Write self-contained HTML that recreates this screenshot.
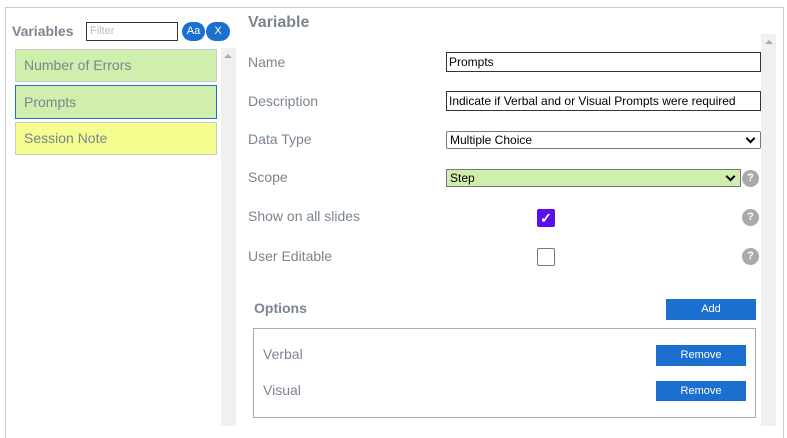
<!DOCTYPE html>
<html><head><style>
body{margin:0;width:787px;height:426px;background:#fff;font-family:"Liberation Sans",Arial,sans-serif;position:relative;overflow:hidden}
.a{position:absolute}
.lab{position:absolute;left:248px;font-size:14px;color:#7a8590}
.inp{position:absolute;left:446px;width:315px;height:20px;border:1px solid #333;box-sizing:border-box;font-size:12px;line-height:18px;padding-left:2px;color:#000}
.q{position:absolute;width:17px;height:17px;border-radius:50%;background:#aaa;color:#fff;font-size:11px;font-weight:bold;text-align:center;line-height:17px}
.btn{position:absolute;background:#1a6fcf;color:#fff;font-size:11px;text-align:center}
.item{position:absolute;left:15px;width:202px;box-sizing:border-box;border:1px solid #ccc;font-size:14px;color:#7a8590;padding-left:8px}
.chev{position:absolute;right:6px;top:3px;width:5px;height:5px;border-right:2px solid #000;border-bottom:2px solid #000;transform:rotate(45deg)}
</style></head><body>
<div class="a" style="left:5px;top:7px;width:777px;height:430px;border:1px solid #ccc;border-bottom:none"></div>
<div class="a" style="left:12px;top:23px;font-size:14px;font-weight:bold;color:#7a8590">Variables</div>
<div class="a" style="left:86px;top:22px;width:92px;height:19px;border:1px solid #333;box-sizing:border-box;font-size:11px;color:#bbb;padding-left:3px;line-height:17px">Filter</div>
<div class="a" style="left:182px;top:22px;width:23px;height:19px;border-radius:10px;background:#1a6fcf;color:#fff;font-size:11px;text-align:center;line-height:19px">Aa</div>
<div class="a" style="left:206px;top:22px;width:24px;height:19px;border-radius:10px;background:#1a6fcf;color:#fff;font-size:11px;text-align:center;line-height:19px">X</div>
<div class="item" style="top:49px;height:33px;line-height:31px;background:#d0eeac">Number of Errors</div>
<div class="item" style="top:85px;height:34px;line-height:32px;background:#d0eeac;border-color:#1a6fcf">Prompts</div>
<div class="item" style="top:122px;height:33px;line-height:31px;background:#f5fd8f">Session Note</div>
<div class="a" style="left:221px;top:48px;width:15px;height:378px;background:#f0f0f0"></div>
<div class="a" style="left:224px;top:54px;width:0;height:0;border:4px solid transparent;border-bottom:4px solid #aaa;border-top:none"></div>
<div class="a" style="left:248px;top:14px;font-size:16px;font-weight:bold;color:#7a8590">Variable</div>
<div class="a" style="left:761px;top:34px;width:15px;height:392px;background:#f0f0f0"></div>
<div class="a" style="left:765px;top:40px;width:0;height:0;border:4px solid transparent;border-bottom:4px solid #aaa;border-top:none"></div>
<div class="lab" style="top:54px">Name</div>
<div class="inp" style="top:52px">Prompts</div>
<div class="lab" style="top:93px">Description</div>
<div class="inp" style="top:91px">Indicate if Verbal and or Visual Prompts were required</div>
<div class="lab" style="top:131px">Data Type</div>
<div class="inp" style="top:131px;height:18px;border-radius:2px;border-color:#777;line-height:16px;padding-left:3px">Multiple Choice<span class="chev"></span></div>
<div class="lab" style="top:169px">Scope</div>
<div class="inp" style="top:169px;height:18px;width:295px;background:#d0eeac;border-color:#777;line-height:16px;padding-left:3px">Step<span class="chev"></span></div>
<div class="q" style="left:742px;top:170px">?</div>
<div class="lab" style="top:208px">Show on all slides</div>
<div class="a" style="left:537px;top:209px;width:18px;height:18px;background:#5a10ee;border-radius:2px;color:#fff;font-size:14px;text-align:center;line-height:18px;font-weight:bold">✓</div>
<div class="q" style="left:742px;top:209px">?</div>
<div class="lab" style="top:248px">User Editable</div>
<div class="a" style="left:537px;top:248px;width:18px;height:18px;border:1px solid #777;box-sizing:border-box;border-radius:2px"></div>
<div class="q" style="left:742px;top:248px">?</div>
<div class="a" style="left:254px;top:300px;font-size:14px;font-weight:bold;color:#7a8590">Options</div>
<div class="btn" style="left:666px;top:299px;width:90px;height:21px;line-height:21px">Add</div>
<div class="a" style="left:253px;top:328px;width:503px;height:90px;border:1px solid #aaa;box-sizing:border-box"></div>
<div class="a" style="left:263px;top:346px;font-size:14px;color:#7a8590">Verbal</div>
<div class="btn" style="left:656px;top:345px;width:90px;height:21px;line-height:21px">Remove</div>
<div class="a" style="left:263px;top:382px;font-size:14px;color:#7a8590">Visual</div>
<div class="btn" style="left:656px;top:381px;width:90px;height:20px;line-height:20px">Remove</div>
</body></html>
